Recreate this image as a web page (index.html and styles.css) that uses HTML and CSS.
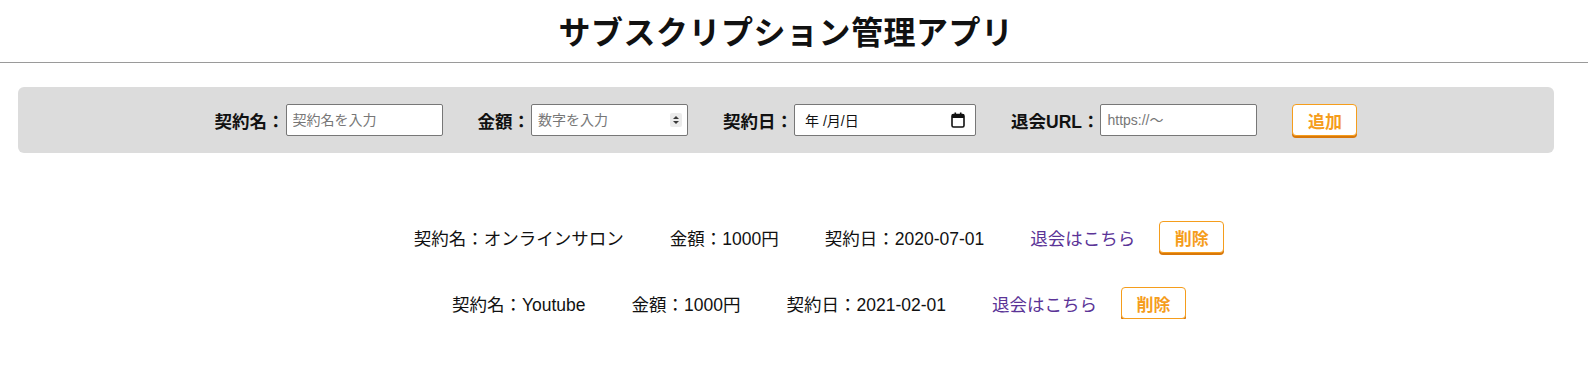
FILE: index.html
```html
<!DOCTYPE html>
<html lang="ja">
<head>
  <meta charset="UTF-8">
  <meta name="viewport" content="width=device-width, initial-scale=1.0">
  <title>サブスクリプション管理アプリ</title>
  <link rel="stylesheet" href="styles.css">
</head>
<body>
  <header class="header">
    <h1 class="title">サブスクリプション管理アプリ</h1>
  </header>

  <main class="app">
    <!-- 追加フォーム -->
    <form class="add-form" onsubmit="return false;">
      <label class="field">
        <span class="field-label">契約名：</span>
        <input class="text-input" type="text" placeholder="契約名を入力">
      </label>
      <label class="field">
        <span class="field-label">金額：</span>
        <span class="text-input number-input">
          <input type="text" placeholder="数字を入力">
          <svg class="spinner" width="12" height="14" viewBox="0 0 12 14">
            <rect x="0" y="0" width="12" height="14" rx="2" fill="#ebebeb"/>
            <path d="M3 6 L6 3 L9 6 Z" fill="#3a3a3a"/>
            <path d="M3 8 L6 11 L9 8 Z" fill="#3a3a3a"/>
          </svg>
        </span>
      </label>
      <label class="field">
        <span class="field-label">契約日：</span>
        <span class="text-input date-input">
          <span class="date-text">年 /月/日</span>
          <svg class="calendar" width="14" height="16" viewBox="0 0 14 16">
            <rect x="1" y="2.5" width="12" height="12.5" rx="1.5" fill="none" stroke="#111" stroke-width="1.6"/>
            <rect x="1" y="2.5" width="12" height="3.5" fill="#111"/>
            <rect x="3.5" y="0.5" width="1.6" height="3" fill="#111"/>
            <rect x="8.9" y="0.5" width="1.6" height="3" fill="#111"/>
          </svg>
        </span>
      </label>
      <label class="field">
        <span class="field-label">退会URL：</span>
        <input class="text-input" type="text" placeholder="https://〜">
      </label>
      <button class="btn" type="submit">追加</button>
    </form>

    <!-- 契約一覧 -->
    <ul class="sub-list">
      <li class="sub-item">
        <span class="sub-cell">契約名：オンラインサロン</span>
        <span class="sub-cell">金額：1000円</span>
        <span class="sub-cell">契約日：2020-07-01</span>
        <a class="cancel-link" href="#">退会はこちら</a>
        <button class="btn">削除</button>
      </li>
      <li class="sub-item">
        <span class="sub-cell">契約名：Youtube</span>
        <span class="sub-cell">金額：1000円</span>
        <span class="sub-cell">契約日：2021-02-01</span>
        <a class="cancel-link" href="#">退会はこちら</a>
        <button class="btn">削除</button>
      </li>
    </ul>
  </main>
</body>
</html>
```

FILE: styles.css
```css
/* リセット */
* {
  margin: 0;
  padding: 0;
  box-sizing: border-box;
}
body {
  font-family: "Liberation Sans", "Noto Sans CJK JP", sans-serif;
  font-size: 17px;
  color: #111;
  background: #fff;
}

/* ヘッダー */
.header {
  height: 63px;
  display: flex;
  justify-content: center;
  align-items: center;
  padding-right: 16px;
  border-bottom: 1px solid #9a9a9a;
}
.title {
  font-size: 32px;
  font-weight: 700;
  line-height: 1;
  margin-top: 4px;
  letter-spacing: 0.5px;
}

.app {
  margin: 0 34px 0 18px;
}

/* 追加フォーム */
.add-form {
  margin-top: 24px;
  height: 66px;
  background: #dcdcdc;
  border-radius: 6px;
  display: flex;
  justify-content: center;
  align-items: center;
  gap: 35px;
}
.field {
  display: flex;
  align-items: center;
  gap: 1px;
}
.field-label {
  font-weight: 700;
  font-size: 17.5px;
}
.text-input {
  width: 157px;
  height: 32px;
  padding: 0 6px;
  border: 1px solid #777;
  border-radius: 2px;
  background: #fff;
  font-family: inherit;
  font-size: 14px;
  color: #111;
}
.text-input::placeholder,
.number-input input::placeholder {
  color: #777;
}
.number-input {
  display: flex;
  align-items: center;
  padding-right: 5px;
}
.number-input input {
  flex: 1;
  min-width: 0;
  border: none;
  outline: none;
  font-family: inherit;
  font-size: 14px;
}
.date-input {
  width: 182px;
  display: flex;
  align-items: center;
  justify-content: space-between;
  padding: 0 10px 0 10px;
}
.date-text {
  font-size: 14px;
  color: #111;
}

/* ボタン */
.btn {
  width: 65px;
  height: 32px;
  background: #fff;
  border: 1px solid #f59d1c;
  border-radius: 4px;
  box-shadow: 0 2px 0 #d9780a;
  color: #f59d1c;
  font-family: inherit;
  font-size: 17px;
  font-weight: 700;
  cursor: pointer;
}

/* 契約一覧 */
.sub-list {
  list-style: none;
  margin-top: 68px;
  padding-left: 66px;
  display: flex;
  flex-direction: column;
  gap: 34px;
}
.sub-item {
  display: flex;
  justify-content: center;
  align-items: center;
  font-size: 17.5px;
}
.sub-cell {
  margin-right: 46px;
}
.cancel-link {
  color: #5b3497;
  text-decoration: none;
  margin-right: 24px;
}
```
